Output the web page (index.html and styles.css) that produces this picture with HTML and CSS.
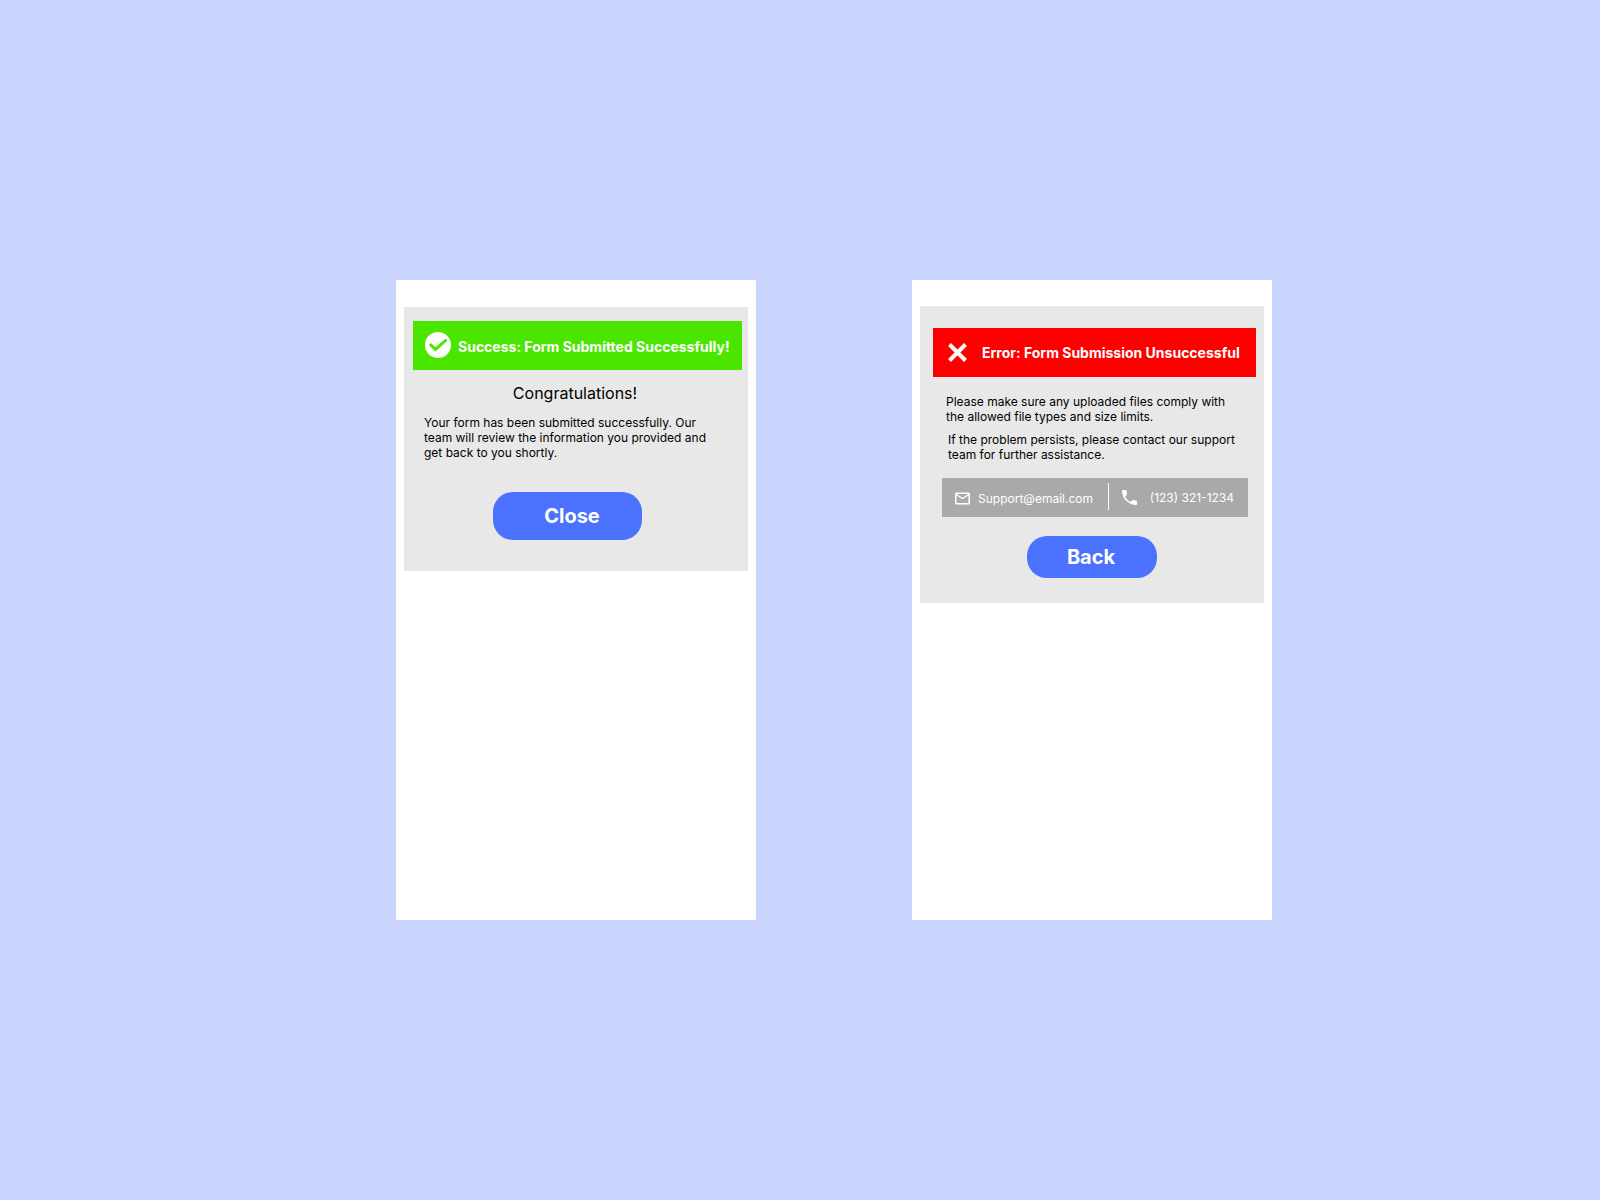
FILE: index.html
```html
<!DOCTYPE html>
<html lang="en">
<head>
  <meta charset="utf-8">
  <meta name="viewport" content="width=device-width, initial-scale=1">
  <title>Form submission messages</title>
  <link rel="stylesheet" href="styles.css">
</head>
<body>
  <main class="stage">
    <section class="screen">
      <article class="card card-success">
        <header class="banner banner-success">
          <svg class="icon-check" viewBox="2 2 20 20" aria-hidden="true"><path fill-rule="evenodd" d="M12 2a10 10 0 1 0 0 20 10 10 0 0 0 0-20zM10 17l-4.500-4.500q-.5-.5 0-1l.6-.6q.5-.5 1 0L10 13.800l7.300-6.300q.5-.5 1 0l.5.6q.5.500 0 1z"/></svg>
          <h1 class="banner-title">Success: Form Submitted Successfully!</h1>
        </header>
        <h2 class="greeting">Congratulations!</h2>
        <p class="message message-success">Your form has been submitted successfully. Our team will review the information you provided and get back to you shortly.</p>
        <button class="button button-close" type="button">Close</button>
      </article>
    </section>

    <section class="screen">
      <article class="card card-error">
        <header class="banner banner-error">
          <svg class="icon-cross" viewBox="0 0 19 19" aria-hidden="true"><path d="M1.500 1.500l16 16M17.500 1.500l-16 16"/></svg>
          <h1 class="banner-title">Error: Form Submission Unsuccessful</h1>
        </header>
        <p class="message message-hint">Please make sure any uploaded files comply with the allowed file types and size limits.</p>
        <p class="message message-support">If the problem persists, please contact our support team for further assistance.</p>
        <div class="contacts">
          <a class="contact contact-email" href="mailto:Support@email.com">
            <svg class="icon-mail" viewBox="2 4 20 16" aria-hidden="true"><path d="M22 6c0-1.100-.9-2-2-2H4c-1.100 0-2 .9-2 2v12c0 1.100.9 2 2 2h16c1.100 0 2-.9 2-2V6zm-2 0l-8 5-8-5h16zm0 12H4V8l8 5 8-5v10z"/></svg>
            <span>Support@email.com</span>
          </a>
          <a class="contact contact-phone" href="tel:+1233211234">
            <svg class="icon-phone" viewBox="3 3 18 18" aria-hidden="true"><path d="M6.620 10.790c1.440 2.830 3.760 5.140 6.590 6.590l2.200-2.200c.27-.27.67-.36 1.020-.24 1.120.37 2.330.57 3.570.57.55 0 1 .45 1 1V20c0 .55-.45 1-1 1-9.390 0-17-7.610-17-17 0-.55.45-1 1-1h3.500c.55 0 1 .45 1 1 0 1.250.2 2.450.57 3.570.11.35.03.74-.25 1.020l-2.200 2.200z"/></svg>
            <span>(123) 321-1234</span>
          </a>
        </div>
        <button class="button button-back" type="button">Back</button>
      </article>
    </section>
  </main>
</body>
</html>
```
FILE: styles.css
```css
* {
  box-sizing: border-box;
}

body {
  margin: 0;
  background: #c9d4ff;
  color: #000;
  font-family: Inter, "Liberation Sans", sans-serif;
}

h1,
h2,
p {
  margin: 0;
}

.stage {
  display: flex;
  flex-wrap: wrap;
  justify-content: center;
  align-content: center;
  gap: 156px;
  min-height: 100vh;
  padding-left: 68px;
}

.screen {
  width: 360px;
  min-height: 640px;
  padding: 26px 8px;
  background: #fff;
}

.card {
  display: flex;
  flex-direction: column;
  background: #e8e8e8;
}

.card-success {
  margin-top: 1px;
  padding: 14px 6px 31px 9px;
}

.card-error {
  padding: 22px 8px 25px 13px;
}

.banner {
  display: flex;
  align-items: center;
  min-height: 49px;
  color: #fff;
}

.banner-success {
  gap: 7px;
  padding: 0 12px 2px;
  background: #4be600;
}

.banner-success .banner-title {
  padding-top: 4px;
}

.banner-error {
  gap: 15px;
  padding: 0 15px;
  background: #f00;
}

.banner-title {
  font-size: 14px;
  font-weight: 700;
  line-height: 17px;
  white-space: nowrap;
}

.icon-check {
  flex: none;
  width: 26px;
  height: 26px;
  fill: #fff;
}

.icon-cross {
  flex: none;
  width: 19px;
  height: 19px;
  fill: none;
  stroke: #fff;
  stroke-width: 4;
}

.greeting {
  margin: 13px 5px 0 0;
  font-size: 16px;
  font-weight: 400;
  line-height: 20px;
  text-align: center;
}

.message {
  font-size: 12px;
  line-height: 15px;
}

.message-success {
  margin: 12px 24px 0 11px;
}

.message-hint {
  margin: 17px 24px 0 13px;
}

.message-support {
  margin: 8px 8px 0 15px;
}

.button {
  align-self: center;
  border: 0;
  border-radius: 20px;
  background: #4b72ff;
  color: #fff;
  font-family: inherit;
  font-size: 20px;
  font-weight: 700;
  line-height: 24px;
  cursor: pointer;
}

.button-close {
  width: 149px;
  margin: 32px 20px 0 0;
  padding: 12px 0 12px 9px;
}

.button-back {
  width: 130px;
  margin: 19px 5px 0 0;
  padding: 9px 2px 9px 0;
}

.contacts {
  display: flex;
  align-items: center;
  min-height: 39px;
  margin: 16px 8px 0 9px;
  padding-bottom: 2px;
  background: #a9a9a9;
}

.contact {
  display: flex;
  align-items: center;
  color: #fff;
  font-size: 12px;
  font-weight: 400;
  line-height: 15px;
  text-decoration: none;
}

.contact-email {
  flex: 1;
  gap: 8px;
  padding: 4px 0 0 13px;
}

.contact-phone {
  gap: 13px;
  min-height: 27px;
  padding: 1px 14px 0 13px;
  border-left: 1px solid #fff;
}

.icon-mail {
  flex: none;
  width: 15px;
  height: 13px;
  fill: #fff;
}

.icon-phone {
  flex: none;
  width: 15px;
  height: 15px;
  fill: #fff;
}
```
